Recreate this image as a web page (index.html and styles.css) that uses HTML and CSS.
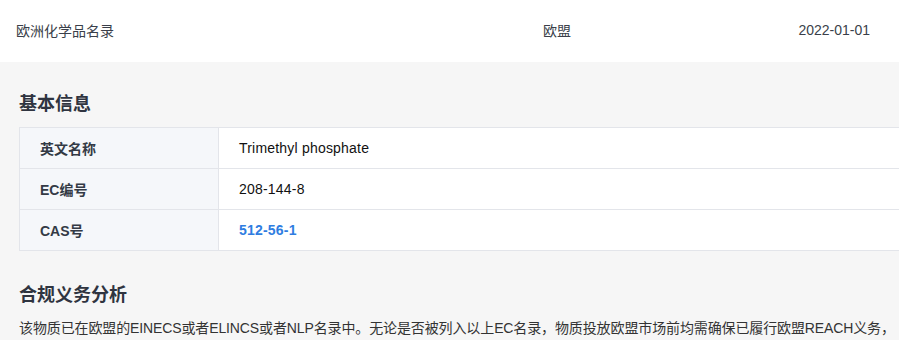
FILE: index.html
```html
<!DOCTYPE html>
<html lang="zh-CN">
<head>
<meta charset="utf-8">
<title>Trimethyl phosphate</title>
<link rel="stylesheet" href="styles.css">
</head>
<body>
<div class="list-row">
  <div class="cell">欧洲化学品名录</div>
  <div class="cell">欧盟</div>
  <div class="cell">2022-01-01</div>
</div>
<main class="content">
  <h2 class="section-title">基本信息</h2>
  <div class="info-table">
    <div class="label">英文名称</div>
    <div class="value">Trimethyl phosphate</div>
    <div class="label">EC编号</div>
    <div class="value">208-144-8</div>
    <div class="label">CAS号</div>
    <div class="value"><a class="link" href="#">512-56-1</a></div>
  </div>
  <h2 class="section-title second">合规义务分析</h2>
  <p class="para">该物质已在欧盟的EINECS或者ELINCS或者NLP名录中。无论是否被列入以上EC名录，物质投放欧盟市场前均需确保已履行欧盟REACH义务，</p>
</main>
</body>
</html>
```
FILE: styles.css
```css
html, body {
  margin: 0;
  padding: 0;
  overflow: hidden;
}
body {
  background: #f6f6f6;
  font-family: "Liberation Sans", "Noto Sans CJK SC", sans-serif;
  color: #333;
  width: 899px;
}
.list-row {
  box-sizing: border-box;
  height: 62px;
  background: #fff;
  display: grid;
  grid-template-columns: 527px 1fr auto;
  align-items: center;
  padding: 0 29px 3px 16px;
  font-size: 14px;
  color: #3a3f4a;
}
.content {
  padding: 29px 0 0 19px;
}
.section-title {
  margin: 0;
  font-size: 18px;
  line-height: 26px;
  font-weight: bold;
  color: #2f3440;
}
.section-title.second {
  margin-top: 31px;
}
.info-table {
  margin-top: 10px;
  display: grid;
  grid-template-columns: 199px 1fr;
  border-top: 1px solid #e3e5ea;
  border-left: 1px solid #e3e5ea;
  width: 1000px;
  font-size: 14px;
}
.label, .value {
  height: 40px;
  display: flex;
  align-items: center;
  padding-left: 20px;
  border-bottom: 1px solid #e3e5ea;
  border-right: 1px solid #e3e5ea;
}
.label {
  width: 178px;
  background: #f5f7fa;
  font-weight: bold;
  color: #333a45;
}
.value {
  background: #fff;
  color: #111;
  letter-spacing: 0.2px;
}
.link {
  color: #2f7de1;
  font-weight: bold;
  text-decoration: none;
}
.para {
  margin: 9px 0 0;
  width: 880px;
  font-size: 14px;
  line-height: 22px;
  letter-spacing: -0.12px;
  color: #333;
}
```
